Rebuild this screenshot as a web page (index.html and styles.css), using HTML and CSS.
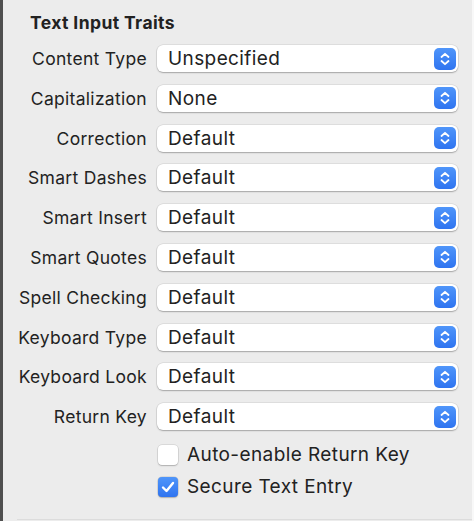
FILE: index.html
```html
<!DOCTYPE html>
<html>
<head>
<meta charset="UTF-8">
<title>Text Input Traits</title>
<link rel="stylesheet" href="styles.css">
</head>
<body>

<div class="panel">

<div class="heading">Text Input Traits</div>

<div class="form">

<div class="label">Content Type</div>
<div class="popup"><span>Unspecified</span><i class="stepper"></i></div>

<div class="label">Capitalization</div>
<div class="popup"><span>None</span><i class="stepper"></i></div>

<div class="label">Correction</div>
<div class="popup"><span>Default</span><i class="stepper"></i></div>

<div class="label">Smart Dashes</div>
<div class="popup"><span>Default</span><i class="stepper"></i></div>

<div class="label">Smart Insert</div>
<div class="popup"><span>Default</span><i class="stepper"></i></div>

<div class="label">Smart Quotes</div>
<div class="popup"><span>Default</span><i class="stepper"></i></div>

<div class="label">Spell Checking</div>
<div class="popup"><span>Default</span><i class="stepper"></i></div>

<div class="label">Keyboard Type</div>
<div class="popup"><span>Default</span><i class="stepper"></i></div>

<div class="label">Keyboard Look</div>
<div class="popup"><span>Default</span><i class="stepper"></i></div>

<div class="label">Return Key</div>
<div class="popup"><span>Default</span><i class="stepper"></i></div>

</div>

<div class="checks">
<div class="check"><i class="box"></i>Auto-enable Return Key</div>
<div class="check"><i class="box on"></i>Secure Text Entry</div>
</div>

<div class="divider"></div>

</div>

</body>
</html>
```

FILE: styles.css
```css
body{
    margin:0;
    background:#ececec;
    font-family:Inter, "Noto Sans", Arial, sans-serif;
    color:#222;
}

.panel{
    height:521px;
    box-sizing:border-box;
    border-left:3px solid #4f4f4f;
    border-right:2px solid #f8f8f8;
    padding:13px 0 0 0;
    position:relative;
}

.heading{
    padding-left:27px;
    font-size:17.5px;
    letter-spacing:0.4px;
    line-height:20px;
    font-weight:bold;
    margin-bottom:12px;
}

.form{
    display:grid;
    grid-template-columns:144px 301px;
    column-gap:10px;
    row-gap:12.8px;
    align-items:center;
}

.label{
    text-align:right;
    font-size:17.5px;
    letter-spacing:0.3px;
    white-space:nowrap;
}

.popup{
    height:27px;
    background:#fff;
    border-radius:6px;
    box-shadow:0 0 0 0.5px rgba(0,0,0,0.12), 0 1px 1.5px rgba(0,0,0,0.25);
    display:flex;
    align-items:center;
    justify-content:space-between;
    padding:0 2px 0 11px;
    font-size:19px;
    letter-spacing:0.4px;
}

.stepper{
    width:22px;
    height:22px;
    border-radius:5px;
    background-image:url("data:image/svg+xml,%3Csvg xmlns='http://www.w3.org/2000/svg' width='22' height='22'%3E%3Cpath d='M7.5 9 L11 5.8 L14.5 9 M7.5 13 L11 16.2 L14.5 13' fill='none' stroke='white' stroke-width='1.8' stroke-linecap='round' stroke-linejoin='round'/%3E%3C/svg%3E"), linear-gradient(#4f95fa,#2f74f0);
}

.checks{
    margin:14px 0 0 155px;
    display:flex;
    flex-direction:column;
    gap:11px;
}

.check{
    display:flex;
    align-items:center;
    gap:9px;
    font-size:19px;
    letter-spacing:0.4px;
    line-height:21px;
}

.box{
    width:20px;
    height:20px;
    box-sizing:border-box;
    border-radius:4px;
    background:#fff;
    box-shadow:0 0 0 0.5px rgba(0,0,0,0.15), 0 1px 1.5px rgba(0,0,0,0.2);
}

.box.on{
    background-image:url("data:image/svg+xml,%3Csvg xmlns='http://www.w3.org/2000/svg' width='20' height='20'%3E%3Cpath d='M5 10.5 L8.5 14 L15 6' fill='none' stroke='white' stroke-width='2.4' stroke-linecap='round' stroke-linejoin='round'/%3E%3C/svg%3E"), linear-gradient(#4f95fa,#2f74f0);
}

.divider{
    position:absolute;
    left:14px;
    right:0;
    bottom:1px;
    height:1px;
    background:#dcdcdc;
}
```
